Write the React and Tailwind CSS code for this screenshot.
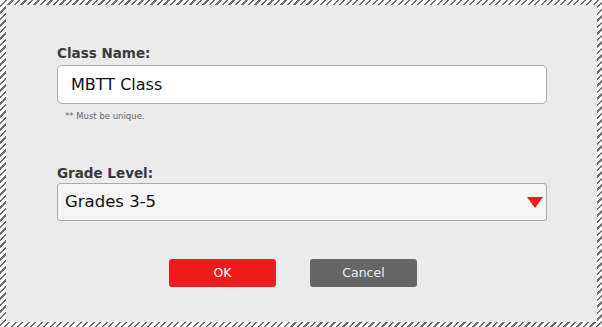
import React from "react";

export default function App() {
  return (
    <div className="w-[602px] h-[327px] p-[5px] pl-[6px] bg-[repeating-linear-gradient(-45deg,#ffffff_0px,#ffffff_3px,#707070_3px,#707070_4.6px)] font-['DejaVu_Sans',sans-serif]">
      <div className="w-full h-full bg-[#ebebeb] pl-[51px] pr-[50px] pt-[38px] flex flex-col">
        <label className="text-[13.5px] font-bold text-[#3a3a3a] leading-[20px] h-[22px]">Class Name:</label>
        <div className="h-[39px] bg-white border border-[#ababab] rounded-[5px] flex items-center pl-[13px] text-[16px] text-[#111]">
          MBTT Class
        </div>
        <div className="pl-[8px] mt-[6px] text-[8.5px] text-[#666] leading-[12px]">** Must be unique.</div>
        <label className="mt-[41px] text-[13.5px] font-bold text-[#3a3a3a] leading-[20px] h-[20px]">Grade Level:</label>
        <div className="h-[38px] bg-[#f5f5f5] border border-[#ababab] rounded-[3px] flex items-center justify-between pl-[7px] pr-[3px] text-[16.5px] text-[#111]">
          <span>Grades 3-5</span>
          <svg width="16" height="11" viewBox="0 0 16 11" className="mt-[1px]">
            <polygon points="0,0 16,0 8,11" fill="#ee1c1c" />
          </svg>
        </div>
        <div className="mt-[38px] flex gap-[34px] pl-[112px]">
          <button className="w-[107px] h-[28px] bg-[#ee1c1c] rounded-[3px] text-white text-[12.5px]">OK</button>
          <button className="w-[107px] h-[28px] bg-[#666666] rounded-[3px] text-[#eeeeee] text-[12.5px]">Cancel</button>
        </div>
      </div>
    </div>
  );
}
